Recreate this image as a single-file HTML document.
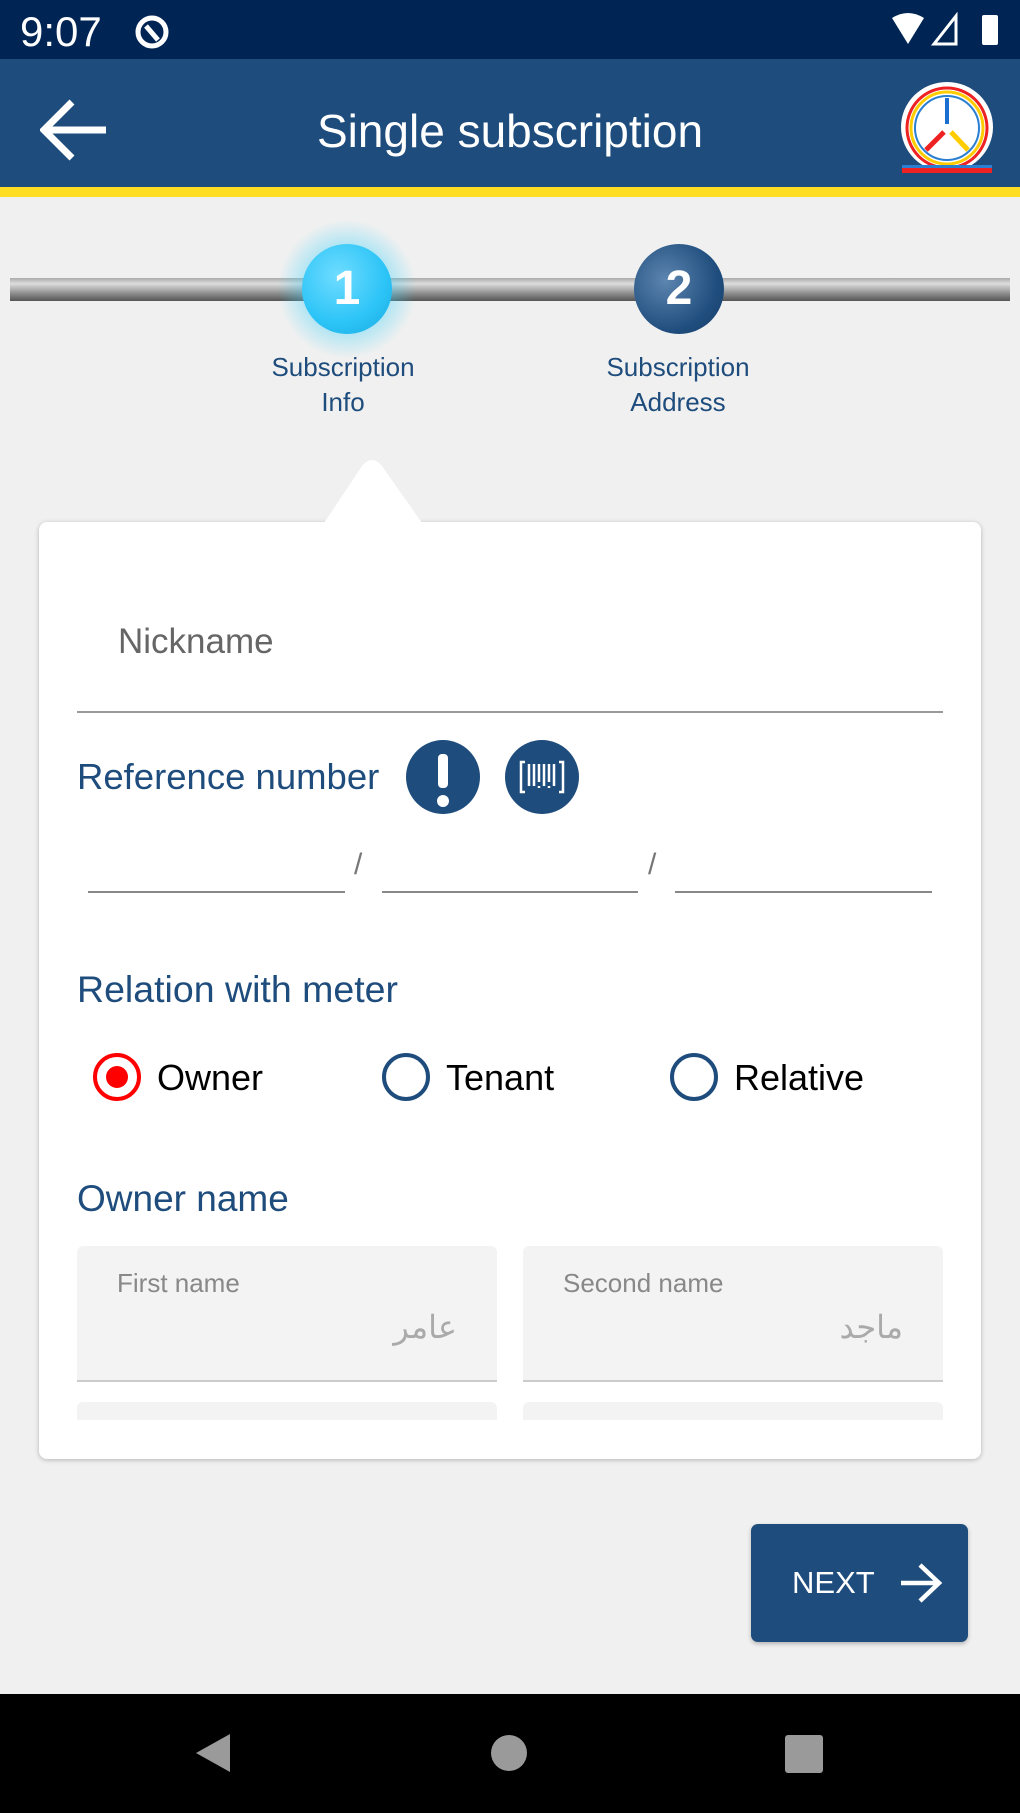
<!DOCTYPE html>
<html><head><meta charset="utf-8"><style>
*{margin:0;padding:0;box-sizing:border-box}
body{width:1020px;height:1813px;background:#f0f0f0;font-family:"Liberation Sans","Noto Sans CJK SC",sans-serif;position:relative;overflow:hidden}
.a{position:absolute}
.blue{color:#1e4c7c}
</style></head><body>
<div class="a" style="left:0;top:0;width:1020px;height:59px;background:#002554"></div>
<div class="a" style="left:20px;top:8px;color:#fff;font-size:42px;">9:07</div>
<svg class="a" style="left:132px;top:12px" width="40" height="40" viewBox="0 0 40 40"><circle cx="20" cy="20" r="14" fill="none" stroke="#fff" stroke-width="5"/><path d="M14 14 L26 28" stroke="#fff" stroke-width="5"/></svg>
<svg class="a" style="left:890px;top:12px" width="110" height="36" viewBox="0 0 110 36"><path d="M2 6 Q18 -4 34 6 L18 32Z" fill="#fff"/><path d="M66 4 L66 32 L44 32Z" fill="none" stroke="#fff" stroke-width="3"/><rect x="92" y="3" width="16" height="30" rx="2" fill="#fff"/></svg>
<div class="a" style="left:0;top:59px;width:1020px;height:128px;background:#1e4c7c"></div>
<div class="a" style="left:0;top:187px;width:1020px;height:10px;background:#ffdd22"></div>
<svg class="a" style="left:40px;top:98px" width="70" height="64" viewBox="0 0 70 64"><path d="M4 32 H66 M32 4 L4 32 L32 60" fill="none" stroke="#fff" stroke-width="7"/></svg>
<div class="a" style="left:0;top:104px;width:1020px;text-align:center;color:#fff;font-size:46px">Single subscription</div>
<svg class="a" style="left:898px;top:80px" width="100" height="100" viewBox="0 0 100 100"><ellipse cx="49" cy="47" rx="46" ry="45" fill="#fff"/><circle cx="49" cy="48" r="40" fill="none" stroke="#e22" stroke-width="3"/><circle cx="49" cy="48" r="36" fill="none" stroke="#fc0" stroke-width="3"/><circle cx="49" cy="48" r="32" fill="none" stroke="#2a7fd0" stroke-width="2"/><path d="M49 18 V44" stroke="#1a6fd0" stroke-width="4"/><path d="M46 52 L28 70" stroke="#e22" stroke-width="5"/><path d="M53 52 L70 70" stroke="#fc0" stroke-width="5"/><rect x="4" y="88" width="90" height="5" fill="#e22"/><rect x="4" y="85" width="90" height="3" fill="#2a7fd0"/></svg>

<div class="a" style="left:10px;top:278px;width:1000px;height:23px;background:linear-gradient(#aaa,#ddd 25%,#888 70%,#555)"></div>
<div class="a" style="left:277px;top:219px;width:140px;height:140px;border-radius:50%;background:radial-gradient(circle,rgba(60,210,250,.55) 30%,rgba(200,240,250,0) 70%)"></div>
<div class="a" style="left:302px;top:244px;width:90px;height:90px;border-radius:50%;background:radial-gradient(circle at 40% 35%,#6fdcff,#2cc4f7 60%,#1aa8e0);color:#fff;font-size:48px;font-weight:bold;text-align:center;line-height:90px">1</div>
<div class="a" style="left:634px;top:244px;width:90px;height:90px;border-radius:50%;background:radial-gradient(circle at 35% 40%,#5d85b0,#1f4d7d 65%,#173f6a);color:#fff;font-size:48px;font-weight:bold;text-align:center;line-height:90px">2</div>
<div class="a blue" style="left:243px;top:350px;width:200px;text-align:center;font-size:26px;line-height:35px">Subscription<br>Info</div>
<div class="a blue" style="left:578px;top:350px;width:200px;text-align:center;font-size:26px;line-height:35px">Subscription<br>Address</div>

<div class="a" style="left:39px;top:522px;width:942px;height:937px;background:#fff;border-radius:8px;box-shadow:0 1px 5px rgba(0,0,0,.25)"></div>
<svg class="a" style="left:322px;top:458px" width="102" height="66" viewBox="0 0 102 66"><path d="M2 65 L40 8 Q50 -4 60 8 L100 65Z" fill="#fff"/></svg>

<div class="a" style="left:118px;top:622px;font-size:35px;color:#666">Nickname</div>
<div class="a" style="left:77px;top:711px;width:866px;height:2px;background:#999"></div>
<div class="a blue" style="left:77px;top:756px;font-size:36.5px">Reference number</div>
<div class="a" style="left:406px;top:740px;width:74px;height:74px;border-radius:50%;background:#1e4c7c"></div>
<div class="a" style="left:438px;top:754px;width:10px;height:34px;border-radius:4px;background:#fff"></div>
<div class="a" style="left:437px;top:795px;width:12px;height:12px;border-radius:50%;background:#fff"></div>
<div class="a" style="left:505px;top:740px;width:74px;height:74px;border-radius:50%;background:#1e4c7c"></div>
<svg class="a" style="left:517px;top:752px" width="50" height="50" viewBox="0 0 50 50" fill="none" stroke="#fff" stroke-width="2.5"><path d="M8 10 H4 V40 H8 M42 10 H46 V40 H42"/><path d="M12 12 V34 M17 12 V34 M22 12 V30 M27 12 V34 M32 12 V30 M37 12 V34"/><path d="M22 34 V36 M32 34 V36"/></svg>
<div class="a" style="left:88px;top:891px;width:257px;height:2px;background:#888"></div>
<div class="a" style="left:382px;top:891px;width:256px;height:2px;background:#888"></div>
<div class="a" style="left:675px;top:891px;width:257px;height:2px;background:#888"></div>
<div class="a" style="left:354px;top:848px;font-size:30px;color:#777">/</div>
<div class="a" style="left:648px;top:848px;font-size:30px;color:#777">/</div>

<div class="a blue" style="left:77px;top:968px;font-size:37.5px">Relation with meter</div>
<div class="a" style="left:93px;top:1053px;width:48px;height:48px;border-radius:50%;border:4px solid #f00"></div>
<div class="a" style="left:106px;top:1066px;width:22px;height:22px;border-radius:50%;background:#f00"></div>
<div class="a" style="left:157px;top:1057px;font-size:36px;color:#000">Owner</div>
<div class="a" style="left:382px;top:1053px;width:48px;height:48px;border-radius:50%;border:4px solid #1e4c7c"></div>
<div class="a" style="left:446px;top:1057px;font-size:36px;color:#000">Tenant</div>
<div class="a" style="left:670px;top:1053px;width:48px;height:48px;border-radius:50%;border:4px solid #1e4c7c"></div>
<div class="a" style="left:734px;top:1057px;font-size:36px;color:#000">Relative</div>

<div class="a blue" style="left:77px;top:1178px;font-size:37px">Owner name</div>
<div class="a" style="left:77px;top:1246px;width:420px;height:136px;background:#f3f3f3;border-radius:6px 6px 0 0;border-bottom:2px solid #ccc"></div>
<div class="a" style="left:523px;top:1246px;width:420px;height:136px;background:#f3f3f3;border-radius:6px 6px 0 0;border-bottom:2px solid #ccc"></div>
<div class="a" style="left:117px;top:1268px;font-size:26px;color:#888">First name</div>
<div class="a" style="left:563px;top:1268px;font-size:26px;color:#888">Second name</div>
<div class="a" style="left:300px;top:1308px;width:157px;text-align:right;font-size:32px;color:#aaa">عامر</div>
<div class="a" style="left:746px;top:1308px;width:157px;text-align:right;font-size:32px;color:#aaa">ماجد</div>
<div class="a" style="left:77px;top:1402px;width:420px;height:18px;background:#f3f3f3;border-radius:6px 6px 0 0"></div>
<div class="a" style="left:523px;top:1402px;width:420px;height:18px;background:#f3f3f3;border-radius:6px 6px 0 0"></div>

<div class="a" style="left:751px;top:1524px;width:217px;height:118px;background:#1e4c7c;border-radius:7px;box-shadow:0 2px 4px rgba(0,0,0,.25)"></div>
<div class="a" style="left:792px;top:1565px;font-size:31px;color:#fff">NEXT</div>
<svg class="a" style="left:898px;top:1562px" width="46" height="42" viewBox="0 0 46 42"><path d="M3 21 H41 M22 3 L41 21 L22 39" fill="none" stroke="#fff" stroke-width="4.5"/></svg>

<div class="a" style="left:0;top:1694px;width:1020px;height:119px;background:#000"></div>
<svg class="a" style="left:190px;top:1730px" width="46" height="46" viewBox="0 0 46 46"><path d="M40 4 V42 L6 23Z" fill="#9a9a9a"/></svg>
<div class="a" style="left:491px;top:1735px;width:36px;height:36px;border-radius:50%;background:#9a9a9a"></div>
<div class="a" style="left:785px;top:1735px;width:38px;height:38px;border-radius:3px;background:#9a9a9a"></div>
</body></html>
